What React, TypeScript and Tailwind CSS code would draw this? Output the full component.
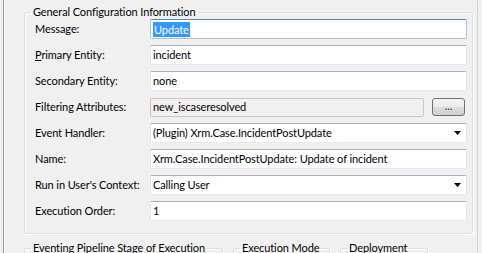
import React from 'react';

const font = { fontFamily: 'Lato, "Liberation Sans", sans-serif' };

type Row = {
  label: React.ReactNode;
  value: string;
  kind?: 'text' | 'focused' | 'readonly' | 'combo';
};

const rows: Row[] = [
  { label: 'Message:', value: 'Update', kind: 'focused' },
  {
    label: (
      <>
        <span className="underline">P</span>rimary Entity:
      </>
    ),
    value: 'incident',
  },
  { label: 'Secondary Entity:', value: 'none' },
  { label: 'Filtering Attributes:', value: 'new_iscaseresolved', kind: 'readonly' },
  { label: 'Event Handler:', value: '(Plugin) Xrm.Case.IncidentPostUpdate', kind: 'combo' },
  { label: 'Name:', value: 'Xrm.Case.IncidentPostUpdate: Update of incident' },
  { label: "Run in User's Context:", value: 'Calling User', kind: 'combo' },
  { label: 'Execution Order:', value: '1' },
];

const Arrow = () => (
  <svg width="7" height="4" viewBox="0 0 7 4" className="shrink-0">
    <path d="M0 0h7L3.5 4z" fill="#000" />
  </svg>
);

const Field = ({ row }: { row: Row }) => {
  if (row.kind === 'readonly') {
    return (
      <div className="flex items-center w-[317px] h-[20px]">
        <div className="flex items-center w-[274px] h-[19px] bg-[#f0f0f0] border border-[#c9c9c9] rounded-[2px] pl-[2px] text-black">
          {row.value}
        </div>
        <button className="ml-[8px] w-[33px] h-[18px] border border-[#707070] rounded-[3px] bg-[linear-gradient(#f2f2f2_0%,#ebebeb_50%,#dddddd_50%,#cfcfcf_100%)] text-[#333] text-[11px] leading-[14px] pb-[2px]">
          ...
        </button>
      </div>
    );
  }
  if (row.kind === 'combo') {
    return (
      <div className="flex items-center justify-between w-[317px] h-[20px] bg-white border border-[#e2e3ea] border-t-[#abadb3] border-b-[#e3e9ef] rounded-[2px] pl-[2px] pr-[5px] text-black">
        <span className="whitespace-nowrap">{row.value}</span>
        <Arrow />
      </div>
    );
  }
  if (row.kind === 'focused') {
    return (
      <div className="flex items-center w-[317px] h-[20px] bg-white border border-[#a8c4e0] border-t-[#5c86b3] rounded-[2px] pl-[2px]">
        <span className="bg-[#3399ff] text-white px-px leading-[15px]">{row.value}</span>
      </div>
    );
  }
  return (
    <div className="flex items-center w-[317px] h-[20px] bg-white border border-[#e2e3ea] border-t-[#abadb3] border-b-[#e3e9ef] rounded-[2px] pl-[2px] text-black whitespace-nowrap">
      {row.value}
    </div>
  );
};

const GroupLegend = ({ children }: { children: React.ReactNode }) => (
  <legend className="ml-[6px] px-[2px] leading-[14px] text-black whitespace-nowrap">{children}</legend>
);

const boxCls =
  'border border-[#d5dfe5] rounded-[3px] shadow-[inset_1px_1px_0_#fff,1px_1px_0_#fff]';

export default function App() {
  return (
    <div
      className="flex w-[482px] h-[253px] overflow-hidden bg-[#f0f0f0] text-[11px] tracking-[-0.1px] text-black"
      style={font}
    >
      <div className="w-[3px]" />
      <div className="w-px bg-[#9a9a9a]" />
      <div className="w-px bg-white" />
      <div className="flex-1 pl-[19px] pr-[4px] pt-[5px]">
        <fieldset className={`w-[449px] ${boxCls}`}>
          <GroupLegend>General Configuration Information</GroupLegend>
          <div className="flex flex-col gap-[6px] pl-[10px] pr-[5px] pb-[12px]">
            {rows.map((row, i) => (
              <div key={i} className="flex items-center h-[20px]">
                <div className="w-[115px] whitespace-nowrap">{row.label}</div>
                <Field row={row} />
              </div>
            ))}
          </div>
        </fieldset>
        <div className="flex gap-[10px] mt-[7px]">
          <fieldset className={`w-[199px] h-[40px] shrink-0 ${boxCls}`}>
            <GroupLegend>Eventing Pipeline Stage of Execution</GroupLegend>
          </fieldset>
          <fieldset className={`w-[97px] h-[40px] shrink-0 ${boxCls}`}>
            <GroupLegend>Execution Mode</GroupLegend>
          </fieldset>
          <fieldset className={`w-[88px] h-[40px] shrink-0 ${boxCls}`}>
            <GroupLegend>Deployment</GroupLegend>
          </fieldset>
        </div>
      </div>
      <div className="w-px bg-[#d5d5d5]" />
      <div className="w-[4px]" />
    </div>
  );
}
